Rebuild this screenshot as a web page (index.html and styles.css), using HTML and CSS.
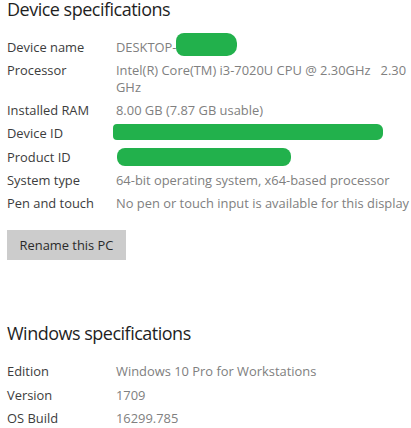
FILE: index.html
```html
<!DOCTYPE html>
<html lang="en">
<head>
<meta charset="utf-8">
<title>About</title>
<link rel="stylesheet" href="styles.css">
</head>
<body>
<main class="page">
  <section class="section">
    <h2 class="section-title">Device specifications</h2>
    <dl class="specs">
      <dt class="label">Device name</dt>
      <dd class="value">DESKTOP-<span class="redact redact-name"></span></dd>
      <dt class="label">Processor</dt>
      <dd class="value">Intel(R) Core(TM) i3-7020U CPU @ 2.30GHz&nbsp;&nbsp;&nbsp;2.30 GHz</dd>
      <dt class="label">Installed RAM</dt>
      <dd class="value">8.00 GB (7.87 GB usable)</dd>
      <dt class="label">Device ID</dt>
      <dd class="value"><span class="redact redact-device"></span></dd>
      <dt class="label">Product ID</dt>
      <dd class="value"><span class="redact redact-product"></span></dd>
      <dt class="label">System type</dt>
      <dd class="value">64-bit operating system, x64-based processor</dd>
      <dt class="label">Pen and touch</dt>
      <dd class="value">No pen or touch input is available for this display</dd>
    </dl>
    <button class="rename-btn" type="button">Rename this PC</button>
  </section>
  <section class="section section-windows">
    <h2 class="section-title">Windows specifications</h2>
    <dl class="specs specs-windows">
      <dt class="label">Edition</dt>
      <dd class="value">Windows 10 Pro for Workstations</dd>
      <dt class="label">Version</dt>
      <dd class="value">1709</dd>
      <dt class="label">OS Build</dt>
      <dd class="value">16299.785</dd>
    </dl>
  </section>
</main>
</body>
</html>
```

FILE: styles.css
```css
* { box-sizing: border-box; }
html, body {
  margin: 0;
  padding: 0;
  background: #ffffff;
  overflow: hidden;
}
body {
  font-family: "Open Sans", "Noto Sans", "Liberation Sans", sans-serif;
  color: #3c3c3c;
  width: 411px;
  height: 428px;
}
.page {
  width: 425px;
  padding: 0 0 0 7px;
  display: flex;
  flex-direction: column;
}
.section { display: flex; flex-direction: column; }
.section-windows { margin-top: 64px; }
.section-title {
  margin: 0;
  font-weight: 400;
  font-size: 18px;
  line-height: 18px;
  letter-spacing: -0.5px;
  color: #1f1f1f;
}
.specs {
  margin: 20.5px 0 0 0;
  display: grid;
  grid-template-columns: 109px 1fr;
  row-gap: 6.33px;
  font-size: 12.9px;
  line-height: 17px;
}
.specs-windows { margin-top: 21.5px; }
.label {
  margin: 0;
  color: #3c3c3c;
  white-space: nowrap;
}
.value {
  margin: 0;
  color: #808080;
  position: relative;
  min-height: 17px;
}
.redact {
  position: absolute;
  background: #22b14c;
}
.redact-name {
  left: 60px;
  top: -5.5px;
  width: 61px;
  height: 23px;
  border-radius: 8px 10px 10px 8px;
}
.redact-device {
  left: -3px;
  top: -1.5px;
  width: 270px;
  height: 16px;
  border-radius: 4px 6px 6px 4px;
}
.redact-product {
  left: 1px;
  top: -1px;
  width: 174px;
  height: 18px;
  border-radius: 8px;
}
.rename-btn {
  align-self: flex-start;
  margin-top: 17.5px;
  width: 119px;
  height: 30px;
  border: none;
  background: #cccccc;
  color: #2a2a2a;
  font-family: inherit;
  font-size: 12.9px;
  padding: 0;
}
```
